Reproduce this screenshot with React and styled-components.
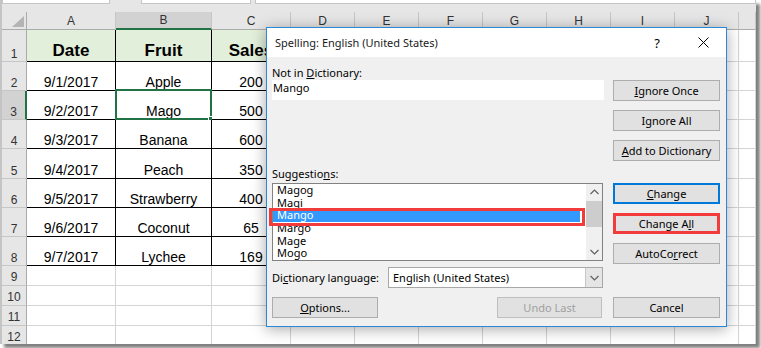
import React from 'react';
import styled, { createGlobalStyle, css } from 'styled-components';

const Global = createGlobalStyle`
  html, body { margin: 0; padding: 0; background: #ffffff; }
  body { width: 761px; height: 348px; overflow: hidden; }
  #root { width: 761px; height: 348px; }
`;

const Frame = styled.div`
  position: relative;
  box-sizing: border-box;
  width: 756px;
  height: 344px;
  overflow: hidden;
  background: #e6e6e6;
  border-left: 2px solid #c4c4c4;
  box-shadow: 4px 4px 3px #808080;
  font-family: "Liberation Sans", Arial, sans-serif;
`;

const TopStrip = styled.div`
  height: 12px;
  display: flex;
  gap: 31px;
`;

const BarBox = styled.div`
  height: 3px;
  background: #ffffff;
  border: 1px solid #c6c6c6;
  border-top: none;
  ${p => (p.$w ? css`width: ${p.$w}px;` : css`flex: 1;`)}
  ${p => p.$ml && css`margin-left: ${p.$ml}px;`}
`;

const Sheet = styled.div`
  display: grid;
  grid-template-columns: 25px 89px 96px 79px repeat(7, 64px) 1fr;
  grid-template-rows: 18px 32px 29px 29px 29px 30px 29px 29px 29px 20px 20px 20px 20px;
  background: #ffffff;
`;

const Corner = styled.div`
  position: relative;
  background: #e6e6e6;
  border-right: 1px solid #ababab;
  border-bottom: 1px solid #ababab;
  display: flex;
  align-items: flex-end;
  justify-content: flex-end;
  padding: 0 2px 2px 0;
`;

const ColHead = styled.div`
  box-sizing: border-box;
  background: ${p => (p.$sel ? '#d2d2d2' : '#e6e6e6')};
  border-right: 1px solid #c6c6c6;
  border-bottom: ${p => (p.$sel ? '2px solid #217346' : '1px solid #ababab')};
  color: #333;
  font-size: 12px;
  display: flex;
  align-items: center;
  justify-content: center;
`;

const RowHead = styled.div`
  box-sizing: border-box;
  background: ${p => (p.$sel ? '#d2d2d2' : '#e6e6e6')};
  border-right: ${p => (p.$sel ? '2px solid #217346' : '1px solid #ababab')};
  border-bottom: 1px solid #c6c6c6;
  color: #333;
  font-size: 12px;
  line-height: 14px;
  display: flex;
  align-items: flex-end;
  justify-content: center;
  padding-bottom: ${p => (p.$short ? 1 : 0)}px;
`;

const Cell = styled.div`
  position: relative;
  box-sizing: border-box;
  display: flex;
  align-items: flex-end;
  justify-content: center;
  white-space: nowrap;
  color: #000;
  font-size: 14px;
  line-height: 16px;
  background: ${p => (p.$head ? '#e2efda' : '#ffffff')};
  border-right: 1px solid ${p => (p.$table ? '#000000' : '#d4d4d4')};
  border-bottom: 1px solid ${p => (p.$table ? '#000000' : '#d4d4d4')};
  ${p => p.$head && css`
    font-size: 17px;
    font-weight: bold;
    line-height: 20px;
  `}
`;

const Selection = styled.div`
  position: absolute;
  top: -2px;
  left: -1px;
  right: -1px;
  bottom: -1px;
  border: 2px solid #217346;
  pointer-events: none;
`;

const Handle = styled.div`
  position: absolute;
  right: -5px;
  bottom: -5px;
  width: 5px;
  height: 5px;
  background: #217346;
  border: 1px solid #ffffff;
`;

/* ---------- Dialog ---------- */

const Dialog = styled.div`
  position: absolute;
  left: 264px;
  top: 27px;
  width: 461px;
  height: 300px;
  box-sizing: border-box;
  border: 1px solid #2b88d8;
  background: #f0f0f0;
  box-shadow: 0 2px 14px rgba(0, 0, 0, 0.35);
  font-family: "Noto Sans", "Open Sans", sans-serif;
  font-size: 11px;
  color: #000;
  display: flex;
  flex-direction: column;
`;

const TitleBar = styled.div`
  height: 29px;
  background: #ffffff;
  display: flex;
  align-items: center;
`;

const Title = styled.div`
  flex: 1;
  padding-left: 8px;
  font-size: 11px;
  color: #1a1a1a;
`;

const Caption = styled.div`
  width: 46px;
  height: 29px;
  display: flex;
  align-items: center;
  justify-content: center;
  font-size: 13px;
  color: #000;
`;

const Body = styled.div`
  flex: 1;
  display: grid;
  grid-template-columns: 332px 107px;
  grid-template-rows: auto 21px;
  column-gap: 9px;
  row-gap: 9px;
  padding: 0 6px 8px 5px;
`;

const LeftCol = styled.div`
  display: flex;
  flex-direction: column;
  padding-top: 8px;
`;

const RightCol = styled.div`
  display: flex;
  flex-direction: column;
  gap: 9px;
  padding-top: 23px;
`;

const Label = styled.div`
  height: 15px;
  line-height: 15px;
  white-space: nowrap;
  margin-top: ${p => p.$mt || 0}px;
`;

const Key = styled.span`
  text-decoration: underline;
  text-underline-offset: 1px;
`;

const Field = styled.div`
  height: 20px;
  line-height: 15px;
  background: #ffffff;
  padding-left: 1px;
  box-sizing: border-box;
`;

const ListBox = styled.div`
  position: relative;
  margin-top: 2px;
  height: 78px;
  box-sizing: border-box;
  border: 1px solid #828282;
  background: #ffffff;
  display: flex;
  width: 331px;
`;

const Items = styled.div`
  flex: 1;
  display: flex;
  flex-direction: column;
  overflow: hidden;
  padding-right: 6px;
`;

const Item = styled.div`
  height: 12.7px;
  line-height: 12.7px;
  flex: none;
  padding-left: 4px;
  background: ${p => (p.$sel ? '#3399ff' : 'transparent')};
  color: ${p => (p.$sel ? '#ffffff' : '#000')};
`;

const Scroll = styled.div`
  width: 16px;
  background: #f0f0f0;
  display: flex;
  flex-direction: column;
  align-items: center;
`;

const Arrow = styled.div`
  height: 16px;
  width: 16px;
  display: flex;
  align-items: center;
  justify-content: center;
`;

const Thumb = styled.div`
  width: 16px;
  height: 26px;
  margin-top: 1px;
  background: #cdcdcd;
`;

const Spacer = styled.div`
  flex: 1;
`;

const Annotation = styled.div`
  position: absolute;
  left: -4px;
  top: 24px;
  width: 316px;
  height: 18px;
  box-sizing: border-box;
  border: 3px solid #f23b3b;
  pointer-events: none;
`;

const DictRow = styled.div`
  margin-top: 6px;
  height: 21px;
  display: flex;
  align-items: center;
  justify-content: space-between;
  padding-right: 1px;
`;

const Select = styled.div`
  width: 215px;
  height: 21px;
  box-sizing: border-box;
  border: 1px solid #a8a8a8;
  background: #ffffff;
  display: flex;
`;

const SelectText = styled.div`
  flex: 1;
  line-height: 19px;
  padding-left: 4px;
`;

const SelectBtn = styled.div`
  width: 16px;
  background: #e5e5e5;
  border-left: 1px solid #c8c8c8;
  display: flex;
  align-items: center;
  justify-content: center;
`;

const variants = {
  normal: css`border: 1px solid #adadad;`,
  blue: css`border: 2px solid #0078d7;`,
  red: css`border: 3px solid #f23b3b;`,
  disabled: css`border: 1px solid #bfbfbf; color: #a0a0a0;`,
};

const Button = styled.div`
  box-sizing: border-box;
  height: 21px;
  width: ${p => p.$w || 107}px;
  background: #e1e1e1;
  display: flex;
  align-items: center;
  justify-content: center;
  white-space: nowrap;
  color: #000;
  margin-top: ${p => p.$mt || 0}px;
  ${p => variants[p.$v || 'normal']}
`;

const BottomLeft = styled.div`
  display: flex;
  justify-content: space-between;
  padding-right: 2px;
`;

const Chevron = ({ up }) => (
  <svg width="9" height="6" viewBox="0 0 9 6">
    <polyline
      points={up ? '0.5,5 4.5,1 8.5,5' : '0.5,1 4.5,5 8.5,1'}
      fill="none"
      stroke="#606060"
      strokeWidth="1.2"
    />
  </svg>
);

const cols = ['A', 'B', 'C', 'D', 'E', 'F', 'G', 'H', 'I', 'J', ''];
const data = [
  ['Date', 'Fruit', 'Sales'],
  ['9/1/2017', 'Apple', '200'],
  ['9/2/2017', 'Mago', '500'],
  ['9/3/2017', 'Banana', '600'],
  ['9/4/2017', 'Peach', '350'],
  ['9/5/2017', 'Strawberry', '400'],
  ['9/6/2017', 'Coconut', '65'],
  ['9/7/2017', 'Lychee', '169'],
];
const suggestions = ['Magog', 'Magi', 'Mango', 'Margo', 'Mage', 'Mogo'];

export default function App() {
  const rows = [];
  for (let r = 0; r < 12; r++) {
    const cells = [];
    cells.push(
      <RowHead key="h" $sel={r === 2} $short={r >= 8}>
        {r + 1}
      </RowHead>
    );
    for (let c = 0; c < 11; c++) {
      const inTable = r < 8 && c < 3;
      const val = inTable ? data[r][c] : '';
      cells.push(
        <Cell key={c} $table={inTable} $head={r === 0 && c < 3}>
          {val}
          {r === 2 && c === 1 && (
            <Selection>
              <Handle />
            </Selection>
          )}
        </Cell>
      );
    }
    rows.push(<React.Fragment key={r}>{cells}</React.Fragment>);
  }

  return (
    <>
      <Global />
      <Frame>
        <TopStrip>
          <BarBox $w={106} />
          <BarBox $w={108} />
          <BarBox $ml={-27} />
        </TopStrip>
        <Sheet>
          <Corner>
            <svg width="12" height="11" viewBox="0 0 12 11">
              <polygon points="12,0 12,11 0,11" fill="#b4b4b4" />
            </svg>
          </Corner>
          {cols.map((c, i) => (
            <ColHead key={i} $sel={c === 'B'}>
              {c}
            </ColHead>
          ))}
          {rows}
        </Sheet>

        <Dialog>
          <TitleBar>
            <Title>Spelling: English (United States)</Title>
            <Caption>?</Caption>
            <Caption>
              <svg width="11" height="11" viewBox="0 0 11 11">
                <path d="M0.5 0.5 L10.5 10.5 M10.5 0.5 L0.5 10.5" stroke="#000" strokeWidth="1" />
              </svg>
            </Caption>
          </TitleBar>
          <Body>
            <LeftCol>
              <Label>
                Not in <Key>D</Key>ictionary:
              </Label>
              <Field>Mango</Field>
              <Label $mt={66}>
                Suggestio<Key>n</Key>s:
              </Label>
              <ListBox>
                <Items>
                  {suggestions.map(s => (
                    <Item key={s} $sel={s === 'Mango'}>
                      {s}
                    </Item>
                  ))}
                </Items>
                <Scroll>
                  <Arrow>
                    <Chevron up />
                  </Arrow>
                  <Thumb />
                  <Spacer />
                  <Arrow>
                    <Chevron />
                  </Arrow>
                </Scroll>
                <Annotation />
              </ListBox>
              <DictRow>
                <span>
                  Di<Key>c</Key>tionary language:
                </span>
                <Select>
                  <SelectText>English (United States)</SelectText>
                  <SelectBtn>
                    <Chevron />
                  </SelectBtn>
                </Select>
              </DictRow>
            </LeftCol>
            <RightCol>
              <Button>
                <Key>I</Key>gnore Once
              </Button>
              <Button>
                I<Key>g</Key>nore All
              </Button>
              <Button>
                <Key>A</Key>dd to Dictionary
              </Button>
              <Button $v="blue" $mt={13}>
                <Key>C</Key>hange
              </Button>
              <Button $v="red">
                Change A<Key>l</Key>l
              </Button>
              <Button>
                AutoCo<Key>r</Key>rect
              </Button>
            </RightCol>
            <BottomLeft>
              <Button $w={106}>
                <Key>O</Key>ptions...
              </Button>
              <Button $w={105} $v="disabled">
                Undo Last
              </Button>
            </BottomLeft>
            <Button>Cancel</Button>
          </Body>
        </Dialog>
      </Frame>
    </>
  );
}
